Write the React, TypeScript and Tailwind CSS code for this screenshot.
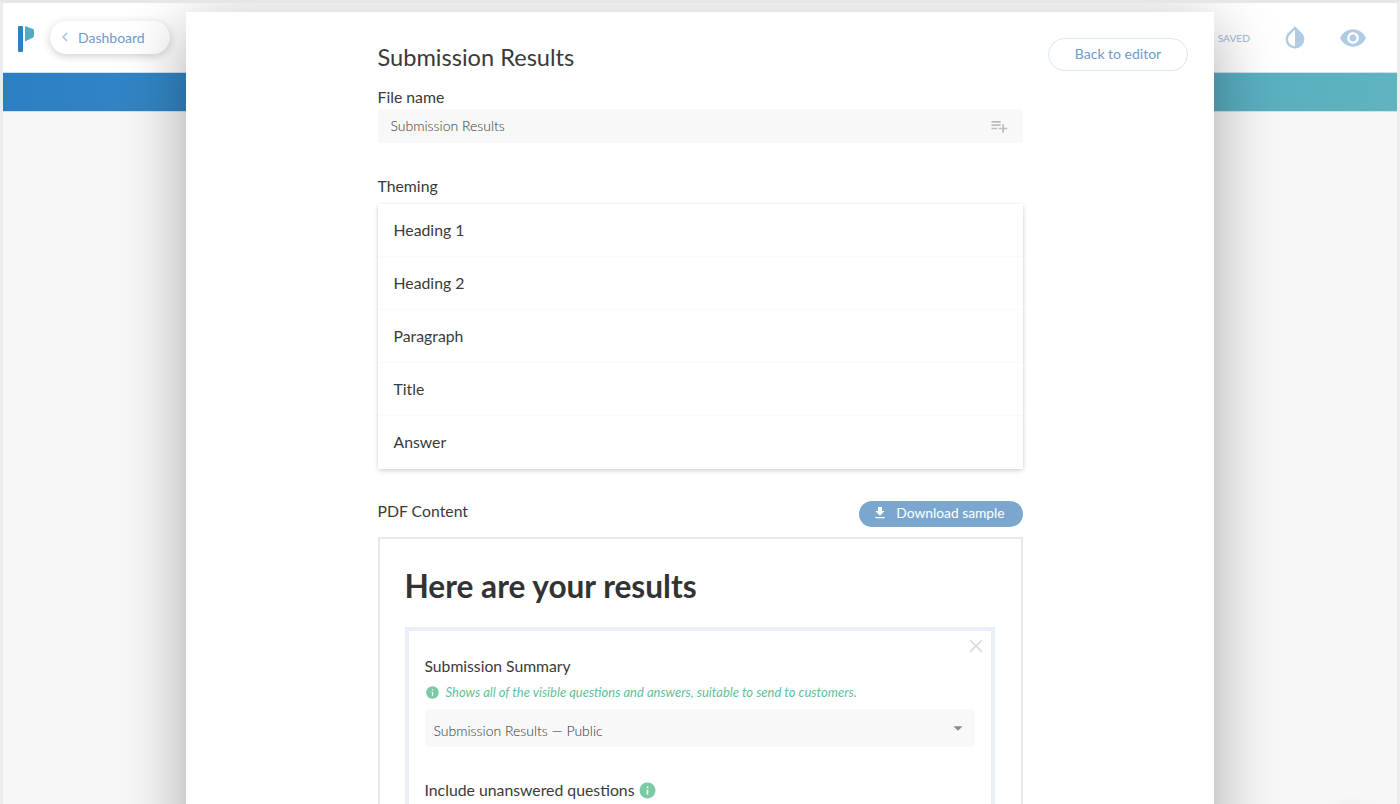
import { MdFileDownload, MdInfo, MdInvertColors, MdPlaylistAdd, MdVisibility, MdArrowDropDown, MdClose, MdChevronLeft } from 'react-icons/md';

const themingRows = ['Heading 1', 'Heading 2', 'Paragraph', 'Title', 'Answer'];

function Logo() {
  return (
    <svg width="18" height="28" viewBox="0 0 18 28" className="mt-[2px] shrink-0">
      <defs>
        <linearGradient id="logoFlag" x1="0" y1="0" x2="1" y2="1">
          <stop offset="0" stopColor="#4fb0c0" />
          <stop offset="1" stopColor="#5aa5c4" />
        </linearGradient>
      </defs>
      <rect x="0" y="1" width="5" height="26" rx="1" fill="#2e80c6" />
      <path d="M7 1 L15 4 Q16 4.5 16 6 L16 10.5 Q16 12 15 12.5 L7 16.5 Z" fill="url(#logoFlag)" />
    </svg>
  );
}

function Header() {
  return (
    <header className="flex h-[69px] items-center justify-between bg-white pl-[15px] pr-[30px]">
      <div className="flex items-center gap-[14px]">
        <Logo />
        <button className="flex h-[33px] w-[120px] items-center rounded-full bg-white pb-[1px] pl-[6px] text-[14px] text-[#6b9ccb] shadow-[0_2px_8px_rgba(0,0,0,0.2)]">
          <MdChevronLeft className="mr-[4px] text-[#a9c4de]" size={18} />
          Dashboard
        </button>
      </div>
      <div className="flex items-center">
        <span className="mr-[31px] pt-[2px] text-[10.2px] text-[#9db9d6]">SAVED</span>
        <MdInvertColors className="mr-[30px] text-[#b0cbe3]" size={28} />
        <MdVisibility className="text-[#b0cbe3]" size={28} />
      </div>
    </header>
  );
}

function Label({ children }: { children: React.ReactNode }) {
  return <div className="text-[15.8px] leading-[20px] text-[#3a3a3a]">{children}</div>;
}

function Modal() {
  return (
    <div className="absolute left-[183px] top-[9px] h-[900px] w-[1028px] bg-white shadow-[0_15px_60px_rgba(0,0,0,0.33)]">
      <button className="absolute right-[26px] top-[26px] h-[33px] w-[140px] rounded-full border border-[#dbe7f2] pb-[3px] text-[14px] text-[#6b9ccb]">
        Back to editor
      </button>
      <div className="mx-auto w-[645px] pt-[30px]">
        <h1 className="text-[23.6px] leading-[30px] text-[#3a3a3a]">Submission Results</h1>
        <div className="mt-[15px]">
          <Label>File name</Label>
        </div>
        <div className="mt-[2px] flex h-[34px] items-center justify-between rounded-[3px] bg-[#f8f8f8] pl-[13px] pr-[14px] text-[14px] font-light text-[#333333]">
          <span className="pb-[1px]">Submission Results</span>
          <MdPlaylistAdd className="text-[#bdbdbd]" size={20} />
        </div>

        <div className="mt-[33px]">
          <Label>Theming</Label>
        </div>
        <div className="mt-[8px] flex flex-col rounded-[3px] shadow-[0_2px_5px_rgba(0,0,0,0.16)]">
          {themingRows.map((row) => (
            <div
              key={row}
              className="flex h-[53px] items-center bg-white px-[16px] pb-[2px] text-[15.8px] text-[#3a3a3a] shadow-[0_0_2px_rgba(0,0,0,0.07)]"
            >
              {row}
            </div>
          ))}
        </div>

        <div className="mt-[32px] flex items-center justify-between">
          <div className="-mt-[7px]">
            <Label>PDF Content</Label>
          </div>
          <button className="flex h-[26px] w-[164px] items-center justify-center gap-[8px] rounded-full bg-[#7ba7cf] pb-[2px] pr-[4px] text-[13.8px] text-white">
            <MdFileDownload size={16} />
            Download sample
          </button>
        </div>

        <div className="mt-[10px] border-2 border-[#e8e8e8] pl-[25px] pr-[26px] pt-[27px]">
          <div className="text-[31.6px] font-bold leading-[40px] text-[#333333]">Here are your results</div>
          <div className="relative mt-[21px] border-4 border-[#e9eff6] px-[16px] pt-[25px]">
            <MdClose className="absolute right-[4px] top-[4px] text-[#dddddd]" size={22} />
            <div className="text-[15.7px] leading-[20px] text-[#3a3a3a]">Submission Summary</div>
            <div className="mt-[6px] flex items-center gap-[6px] text-[13px] italic leading-[20px] text-[#5cc39b]">
              <MdInfo className="text-[#7cc9a6]" size={15} />
              Shows all of the visible questions and answers, suitable to send to customers.
            </div>
            <div className="mt-[7px] flex h-[38px] items-center justify-between rounded-[3px] bg-[#f8f8f8] pl-[9px] pr-[6px] text-[14px] font-light text-[#333333]">
              <span className="pt-[4px]">Submission Results — Public</span>
              <MdArrowDropDown className="text-[#8a8a8a]" size={22} />
            </div>
            <div className="mt-[33px] flex items-center gap-[3px] text-[15.8px] leading-[20px] text-[#3a3a3a]">
              Include unanswered questions
              <MdInfo className="text-[#7cc9a6]" size={19} />
            </div>
            <div className="h-[40px]" />
          </div>
        </div>
      </div>
    </div>
  );
}

export default function App() {
  return (
    <div className="relative h-[804px] w-[1400px] overflow-hidden border-x-[3px] border-t-[3px] border-x-[#ececec] border-t-[#e6e6e6] bg-[#f7f7f7] font-['Lato',sans-serif]">
      <Header />
      <div className="h-[40px] border-y border-[#cfe0ee] bg-gradient-to-r from-[#2d7fc5] to-[#5fb4bf]" />
      <Modal />
      <div className="absolute left-[1330px] top-[812px] h-[40px] w-[40px] rounded-full bg-[#f7f7f7] shadow-[0_0_20px_rgba(0,0,0,0.25)]" />
    </div>
  );
}
